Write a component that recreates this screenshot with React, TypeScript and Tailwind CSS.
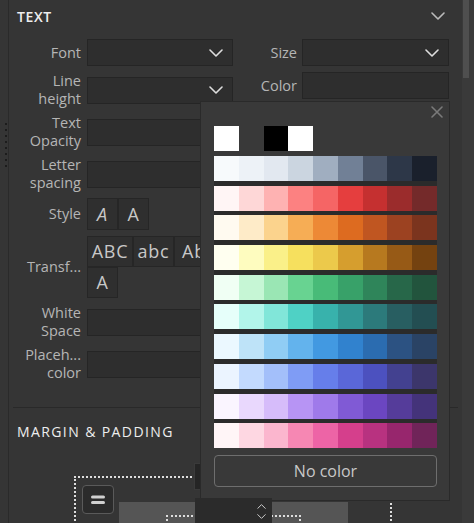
import React from 'react'

const swatchRows: string[][] = [
  ['bg-[#f7fafc]', 'bg-[#edf2f7]', 'bg-[#e2e8f0]', 'bg-[#cbd5e0]', 'bg-[#a0aec0]', 'bg-[#718096]', 'bg-[#4a5568]', 'bg-[#2d3748]', 'bg-[#1a202c]'],
  ['bg-[#fff5f5]', 'bg-[#fed7d7]', 'bg-[#feb2b2]', 'bg-[#fc8181]', 'bg-[#f56565]', 'bg-[#e53e3e]', 'bg-[#c53030]', 'bg-[#9b2c2c]', 'bg-[#742a2a]'],
  ['bg-[#fffaf0]', 'bg-[#feebc8]', 'bg-[#fbd38d]', 'bg-[#f6ad55]', 'bg-[#ed8936]', 'bg-[#dd6b20]', 'bg-[#c05621]', 'bg-[#9c4221]', 'bg-[#7b341e]'],
  ['bg-[#fffff0]', 'bg-[#fefcbf]', 'bg-[#faf089]', 'bg-[#f6e05e]', 'bg-[#ecc94b]', 'bg-[#d69e2e]', 'bg-[#b7791f]', 'bg-[#975a16]', 'bg-[#744210]'],
  ['bg-[#f0fff4]', 'bg-[#c6f6d5]', 'bg-[#9ae6b4]', 'bg-[#68d391]', 'bg-[#48bb78]', 'bg-[#38a169]', 'bg-[#2f855a]', 'bg-[#276749]', 'bg-[#22543d]'],
  ['bg-[#e6fffa]', 'bg-[#b2f5ea]', 'bg-[#81e6d9]', 'bg-[#4fd1c5]', 'bg-[#38b2ac]', 'bg-[#319795]', 'bg-[#2c7a7b]', 'bg-[#285e61]', 'bg-[#234e52]'],
  ['bg-[#ebf8ff]', 'bg-[#bee3f8]', 'bg-[#90cdf4]', 'bg-[#63b3ed]', 'bg-[#4299e1]', 'bg-[#3182ce]', 'bg-[#2b6cb0]', 'bg-[#2c5282]', 'bg-[#2a4365]'],
  ['bg-[#ebf4ff]', 'bg-[#c3dafe]', 'bg-[#a3bffa]', 'bg-[#7f9cf5]', 'bg-[#667eea]', 'bg-[#5a67d8]', 'bg-[#4c51bf]', 'bg-[#434190]', 'bg-[#3c366b]'],
  ['bg-[#faf5ff]', 'bg-[#e9d8fd]', 'bg-[#d6bcfa]', 'bg-[#b794f4]', 'bg-[#9f7aea]', 'bg-[#805ad5]', 'bg-[#6b46c1]', 'bg-[#553c9a]', 'bg-[#44337a]'],
  ['bg-[#fff5f7]', 'bg-[#fed7e2]', 'bg-[#fbb6ce]', 'bg-[#f687b3]', 'bg-[#ed64a6]', 'bg-[#d53f8c]', 'bg-[#b83280]', 'bg-[#97266d]', 'bg-[#702459]'],
]

function Chevron({ className = 'h-[8px] w-[14px] text-[#dddddd]' }: { className?: string }) {
  return (
    <svg viewBox="0 0 14 8" className={className} fill="none" stroke="currentColor" strokeWidth="1.6" strokeLinecap="round" strokeLinejoin="round">
      <path d="M1 1l6 6 6-6" />
    </svg>
  )
}

function Label({ lines, width = 'w-[72px]' }: { lines: string[]; width?: string }) {
  return (
    <div className={`${width} shrink-0 text-right text-[14.5px] leading-[18px] text-[#b5b5b5]`}>
      {lines.map((l) => (
        <div key={l}>{l}</div>
      ))}
    </div>
  )
}

function Field({ select, width = 'w-[146px]' }: { select?: boolean; width?: string }) {
  return (
    <div className={`${width} flex h-[27px] shrink-0 items-center justify-end border border-[#252525] bg-[#2e2e2e] pr-[9px]`}>
      {select && <Chevron />}
    </div>
  )
}

function Cell({ lines, children }: { lines: string[]; children: React.ReactNode }) {
  return (
    <div className="flex w-[224px] shrink-0 items-center gap-[6px]">
      <Label lines={lines} />
      {children}
    </div>
  )
}

function ToggleBtn({ children, width, height = 'h-[31px]' }: { children: React.ReactNode; width: string; height?: string }) {
  return (
    <div className={`${width} ${height} flex items-center justify-center border border-[#262626] bg-[#2f2f2f] text-[18px] tracking-[0.8px] text-[#c8c8c8]`}>
      {children}
    </div>
  )
}

function ColorPopup() {
  return (
    <div className="absolute left-[200px] top-[101px] h-[400px] w-[250px] border border-[#2a2a2a] bg-[#393939] px-[13px] pt-[24px]">
      <svg viewBox="0 0 12 12" className="absolute right-[6px] top-[4px] h-[12px] w-[12px] text-[#7a7a7a]" fill="none" stroke="currentColor" strokeWidth="1.6" strokeLinecap="round">
        <path d="M1 1l10 10M11 1L1 11" />
      </svg>
      <div className="grid h-[25px] w-[223px] grid-cols-9">
        <div className="bg-white" />
        <div />
        <div className="bg-black" />
        <div className="bg-white" />
      </div>
      <div className="mt-[5px] flex w-[223px] flex-col gap-[4.7px] bg-[#2b2b2b]">
        {swatchRows.map((row, i) => (
          <div key={i} className="grid h-[25px] grid-cols-9">
            {row.map((c) => (
              <div key={c} className={c} />
            ))}
          </div>
        ))}
      </div>
      <div className="mt-[7px] flex h-[32px] w-[223px] items-center justify-center rounded-[4px] border border-[#6e6e6e] text-[16px] text-[#c8c8c8]">
        No color
      </div>
    </div>
  )
}

export default function App() {
  return (
    <div className="relative flex h-[523px] w-[474px] overflow-hidden bg-[#353535] font-['Open_Sans',sans-serif]">
      {/* resize handle */}
      <div className="flex w-[9px] shrink-0 flex-col items-end border-r border-[#2a2a2a] pt-[123px]">
        <div className="flex flex-col gap-[4px] pr-[1px]">
          {Array.from({ length: 8 }).map((_, i) => (
            <span key={i} className="block h-[2px] w-[2px] rounded-full bg-[#141414]" />
          ))}
        </div>
      </div>

      <div className="min-w-0 flex-1">
        {/* TEXT section */}
        <div className="flex h-[32px] items-center justify-between pl-[8px] pr-[17px]">
          <span className="text-[14px] font-semibold tracking-[0.6px] text-[#eeeeee]">TEXT</span>
          <Chevron className="h-[8px] w-[14px] text-[#bbbbbb]" />
        </div>

        <div className="mt-[7px] flex flex-col gap-[6px]">
          <div className="flex items-start">
            <Cell lines={['Font']}>
              <Field select />
            </Cell>
            <div className="flex items-center gap-[5px]">
              <Label lines={['Size']} width="w-[64px]" />
              <Field select width="w-[147px]" />
            </div>
          </div>
          <div className="flex items-start">
            <Cell lines={['Line', 'height']}>
              <Field select />
            </Cell>
            <div className="flex items-center gap-[5px]">
              <Label lines={['Color']} width="w-[64px]" />
              <Field width="w-[147px]" />
            </div>
          </div>
          <Cell lines={['Text', 'Opacity']}>
            <Field />
          </Cell>
          <Cell lines={['Letter', 'spacing']}>
            <Field />
          </Cell>
          <Cell lines={['Style']}>
            <div className="flex w-[146px]">
              <ToggleBtn width="w-[31px]" height="h-[32px]">
                <span className="italic">A</span>
              </ToggleBtn>
              <ToggleBtn width="w-[31px]" height="h-[32px]">
                A
              </ToggleBtn>
            </div>
          </Cell>
          <Cell lines={['Transf...']}>
            <div className="flex w-[146px] flex-wrap">
              <ToggleBtn width="w-[46px]">ABC</ToggleBtn>
              <ToggleBtn width="w-[41px]">abc</ToggleBtn>
              <ToggleBtn width="w-[40px]">Ab</ToggleBtn>
              <ToggleBtn width="w-[31px]">A</ToggleBtn>
            </div>
          </Cell>
          <Cell lines={['White', 'Space']}>
            <Field />
          </Cell>
          <Cell lines={['Placeh...', 'color']}>
            <Field />
          </Cell>
        </div>

        <div className="mx-[4px] mt-[25px] h-px bg-[#292929]" />

        {/* MARGIN & PADDING section */}
        <div className="flex h-[46px] items-center pl-[8px]">
          <span className="text-[14px] font-medium tracking-[1.4px] text-[#eeeeee]">MARGIN &amp; PADDING</span>
        </div>

        <div className="ml-[65px] mt-[22px] h-[80px] w-[318px] border-2 border-dotted border-[#dddddd]">
          <div className="flex items-start">
            <div className="ml-[6px] mt-[7px] flex h-[29px] w-[32px] items-center justify-center rounded-[4px] border border-[#5a5a5a] bg-[#2b2b2b]">
              <svg viewBox="0 0 14 10" className="h-[10px] w-[14px] text-[#d0d0d0]" fill="currentColor">
                <rect x="0" y="0.5" width="14" height="3" rx="1.5" />
                <rect x="0" y="6" width="14" height="3" rx="1.5" />
              </svg>
            </div>
            <div className="relative ml-[5px] mt-[24px] h-[40px] w-[229px] bg-[#555555]">
              <div className="absolute left-[76px] top-[-4px] z-10 flex h-[40px] w-[77px] flex-col items-end gap-[5px] bg-[#2b2b2b] pr-[6px] pt-[6px]">
                <Chevron className="h-[5px] w-[9px] rotate-180 text-[#cccccc]" />
                <Chevron className="h-[5px] w-[9px] text-[#cccccc]" />
              </div>
              <div className="mx-[47px] mt-[13px] h-[30px] border-2 border-dotted border-[#dddddd]" />
            </div>
          </div>
        </div>
      </div>

      {/* scrollbar */}
      <div className="w-[12px] shrink-0 bg-[#3a3a3a]">
        <div className="ml-[1px] h-[78px] w-[6px] bg-[#4f4f4f]" />
      </div>

      <div className="absolute left-[194px] top-[463px] h-[27px] w-[8px] border border-[#3a3a3a] bg-[#252525]" />
      <ColorPopup />
    </div>
  )
}
